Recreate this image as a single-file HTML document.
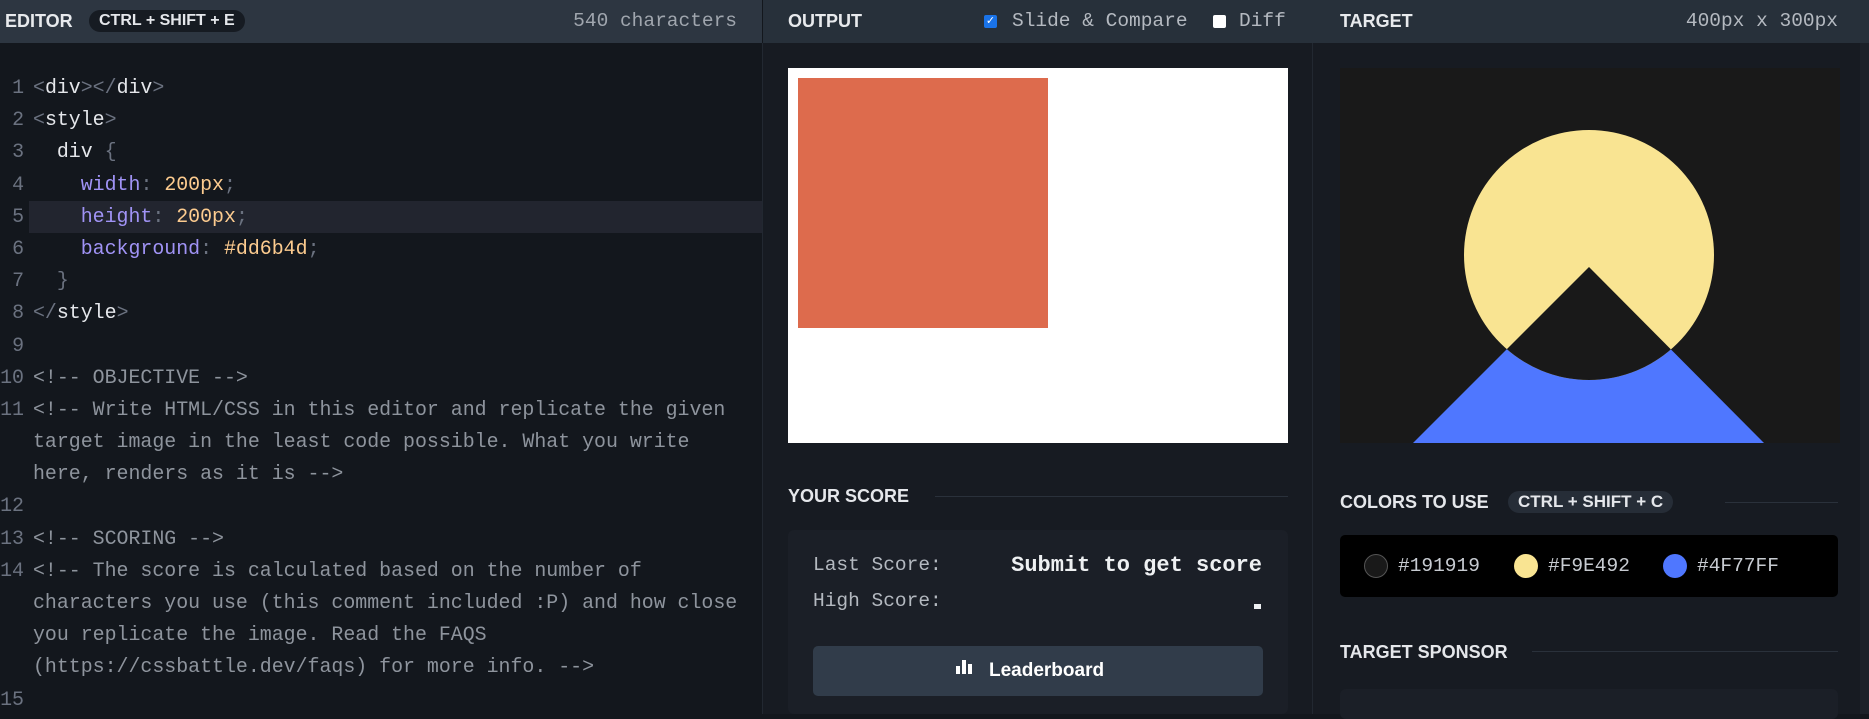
<!DOCTYPE html>
<html><head><style>
*{margin:0;padding:0;box-sizing:border-box}
body{width:1869px;height:714px;overflow:hidden;background:#13171d;font-family:"Liberation Sans",sans-serif;position:relative;color:#e5e7eb}
.abs{position:absolute}
.hdr{top:0;height:43px;background:#2a333e}
.ht{font-weight:bold;font-size:18px;color:#e8eaed;top:11px}
.mono{font-family:"Liberation Mono",monospace}
.pill{background:#161b22;border-radius:12px;font-weight:bold;font-size:16px;color:#e5e7eb;padding:0 10px;height:22px;line-height:22px}
.code{font-family:"Liberation Mono",monospace;font-size:19.9px;left:0;top:72px;width:762px}
.row{height:32.2px;line-height:32.2px;white-space:pre;position:relative}
.ln{display:inline-block;width:24px;text-align:right;color:#6b7280;margin-right:9px}
.p{color:#6b7280}.t{color:#e5e7eb}.pr{color:#a093f5}.v{color:#fccb8f}.c{color:#8e949d}
.sec{font-weight:bold;font-size:18px;color:#e5e7eb}
.line{height:1px;background:#2a313b}
</style></head><body>
<div class="abs" style="left:0;top:0;width:762px;height:714px;background:#13171d"></div>
<div class="abs" style="left:763px;top:0;width:550px;height:714px;background:#171b22"></div>
<div class="abs" style="left:1313px;top:0;width:556px;height:714px;background:#171b22"></div>
<div class="abs" style="left:762px;top:43px;width:1px;height:671px;background:#222831"></div>
<div class="abs" style="left:1312px;top:43px;width:1px;height:671px;background:#222831"></div>
<div class="abs" style="left:1860px;top:0;width:9px;height:714px;background:#1c2129"></div>
<div class="abs hdr" style="left:0;width:762px;background:#2d3641"></div>
<div class="abs hdr" style="left:763px;width:1106px;background:#27303a"></div>
<div class="abs ht" style="left:5px">EDITOR</div>
<div class="abs pill" style="left:89px;top:10px">CTRL + SHIFT + E</div>
<div class="abs mono" style="right:1132px;top:10px;font-size:19.5px;color:#a0a6ae">540 characters</div>
<div class="abs ht" style="left:788px">OUTPUT</div>
<div class="abs" style="left:984px;top:15px;width:13px;height:13px;background:#1a73e8;border-radius:2px;color:#fff;font-size:11px;line-height:13px;text-align:center">✓</div>
<div class="abs mono" style="left:1012px;top:10px;font-size:19.5px;color:#b4b9c0">Slide &amp; Compare</div>
<div class="abs" style="left:1213px;top:15px;width:13px;height:13px;background:#fff;border-radius:2px"></div>
<div class="abs mono" style="left:1239px;top:10px;font-size:19.5px;color:#b4b9c0">Diff</div>
<div class="abs ht" style="left:1340px">TARGET</div>
<div class="abs mono" style="right:31px;top:10px;font-size:19.5px;color:#b4b9c0">400px x 300px</div>

<div class="abs" style="left:29px;top:201px;width:733px;height:32px;background:#22252f"></div>
<div class="abs code">
<div class="row"><span class="ln">1</span><span class="p">&lt;</span><span class="t">div</span><span class="p">&gt;&lt;/</span><span class="t">div</span><span class="p">&gt;</span></div>
<div class="row"><span class="ln">2</span><span class="p">&lt;</span><span class="t">style</span><span class="p">&gt;</span></div>
<div class="row"><span class="ln">3</span>  <span class="t">div</span> <span class="p">{</span></div>
<div class="row"><span class="ln">4</span>    <span class="pr">width</span><span class="p">:</span> <span class="v">200px</span><span class="p">;</span></div>
<div class="row"><span class="ln">5</span>    <span class="pr">height</span><span class="p">:</span> <span class="v">200px</span><span class="p">;</span></div>
<div class="row"><span class="ln">6</span>    <span class="pr">background</span><span class="p">:</span> <span class="v">#dd6b4d</span><span class="p">;</span></div>
<div class="row"><span class="ln">7</span>  <span class="p">}</span></div>
<div class="row"><span class="ln">8</span><span class="p">&lt;/</span><span class="t">style</span><span class="p">&gt;</span></div>
<div class="row"><span class="ln">9</span></div>
<div class="row"><span class="ln">10</span><span class="c">&lt;!-- OBJECTIVE --&gt;</span></div>
<div class="row"><span class="ln">11</span><span class="c">&lt;!-- Write HTML/CSS in this editor and replicate the given</span></div>
<div class="row"><span class="ln"></span><span class="c">target image in the least code possible. What you write</span></div>
<div class="row"><span class="ln"></span><span class="c">here, renders as it is --&gt;</span></div>
<div class="row"><span class="ln">12</span></div>
<div class="row"><span class="ln">13</span><span class="c">&lt;!-- SCORING --&gt;</span></div>
<div class="row"><span class="ln">14</span><span class="c">&lt;!-- The score is calculated based on the number of</span></div>
<div class="row"><span class="ln"></span><span class="c">characters you use (this comment included :P) and how close</span></div>
<div class="row"><span class="ln"></span><span class="c">you replicate the image. Read the FAQS</span></div>
<div class="row"><span class="ln"></span><span class="c">(https://cssbattle.dev/faqs) for more info. --&gt;</span></div>
<div class="row"><span class="ln">15</span></div>
</div>

<div class="abs" style="left:788px;top:68px;width:500px;height:375px;background:#fff"></div>
<div class="abs" style="left:798px;top:78px;width:250px;height:250px;background:#dd6b4d"></div>
<div class="abs sec" style="left:788px;top:486px">YOUR SCORE</div>
<div class="abs line" style="left:935px;top:496px;width:353px"></div>
<div class="abs" style="left:788px;top:530px;width:500px;height:184px;background:#1b1f27;border-radius:6px"></div>
<div class="abs mono" style="left:813px;top:554px;font-size:19.5px;color:#b4b9c0">Last Score:</div>
<div class="abs mono" style="left:813px;top:590px;font-size:19.5px;color:#b4b9c0">High Score:</div>
<div class="abs mono" style="right:607px;top:553px;font-size:22px;font-weight:bold;color:#eef0f2">Submit to get score</div>
<div class="abs" style="left:1254px;top:604px;width:7px;height:5px;background:#eef0f2"></div>
<div class="abs" style="left:813px;top:646px;width:450px;height:50px;background:#313c4a;border-radius:5px"></div>
<div class="abs" style="left:956px;top:666px;width:4px;height:8px;background:#fff"></div>
<div class="abs" style="left:962px;top:660px;width:4px;height:14px;background:#fff"></div>
<div class="abs" style="left:968px;top:664px;width:4px;height:10px;background:#fff"></div>
<div class="abs" style="left:989px;top:660px;font-size:19px;font-weight:bold;color:#fff">Leaderboard</div>

<svg class="abs" style="left:1340px;top:68px" width="500" height="375" viewBox="0 0 500 375">
<defs><clipPath id="cc"><circle cx="249" cy="187" r="125"/></clipPath></defs>
<rect width="500" height="375" fill="#191919"/>
<polygon points="249,199 73,375 424,375" fill="#4F77FF"/>
<circle cx="249" cy="187" r="125" fill="#F9E492"/>
<polygon points="249,199 73,375 424,375" fill="#191919" clip-path="url(#cc)"/>
</svg>
<div class="abs sec" style="left:1340px;top:492px">COLORS TO USE</div>
<div class="abs pill" style="left:1508px;top:491px;background:#262d37;font-size:17px">CTRL + SHIFT + C</div>
<div class="abs line" style="left:1725px;top:502px;width:113px"></div>
<div class="abs" style="left:1340px;top:535px;width:498px;height:62px;background:#000;border-radius:5px"></div>
<div class="abs" style="left:1364px;top:554px;width:24px;height:24px;border-radius:50%;background:#191919;border:1px solid #555"></div>
<div class="abs mono" style="left:1398px;top:555px;font-size:19.5px;color:#c7cbd1">#191919</div>
<div class="abs" style="left:1514px;top:554px;width:24px;height:24px;border-radius:50%;background:#F9E492"></div>
<div class="abs mono" style="left:1548px;top:555px;font-size:19.5px;color:#c7cbd1">#F9E492</div>
<div class="abs" style="left:1663px;top:554px;width:24px;height:24px;border-radius:50%;background:#4F77FF"></div>
<div class="abs mono" style="left:1697px;top:555px;font-size:19.5px;color:#c7cbd1">#4F77FF</div>
<div class="abs sec" style="left:1340px;top:642px">TARGET SPONSOR</div>
<div class="abs line" style="left:1532px;top:651px;width:306px"></div>
<div class="abs" style="left:1340px;top:689px;width:498px;height:30px;background:#1b1f27;border-radius:6px"></div>
</body></html>
